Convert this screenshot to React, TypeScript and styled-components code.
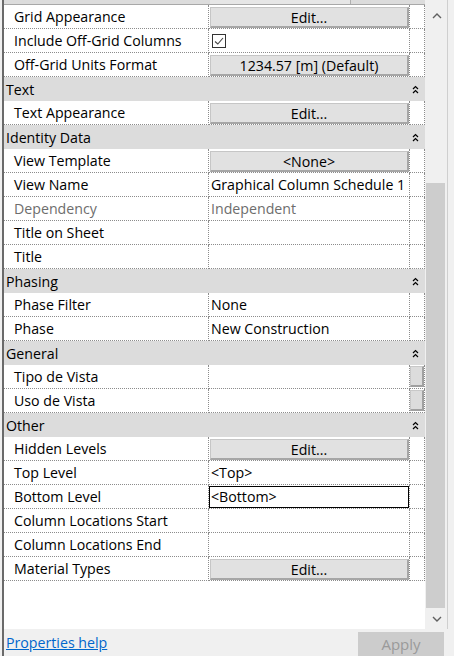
import React from "react";
import styled, { createGlobalStyle } from "styled-components";

type Prop = {
  name: string;
  value?: string;
  kind?: "text" | "button" | "check" | "muted" | "focus" | "spin";
};

type Group = { title?: string; rows: Prop[] };

const groups: Group[] = [
  {
    rows: [
      { name: "Grid Appearance", value: "Edit...", kind: "button" },
      { name: "Include Off-Grid Columns", kind: "check" },
      { name: "Off-Grid Units Format", value: "1234.57 [m] (Default)", kind: "button" },
    ],
  },
  { title: "Text", rows: [{ name: "Text Appearance", value: "Edit...", kind: "button" }] },
  {
    title: "Identity Data",
    rows: [
      { name: "View Template", value: "<None>", kind: "button" },
      { name: "View Name", value: "Graphical Column Schedule 1" },
      { name: "Dependency", value: "Independent", kind: "muted" },
      { name: "Title on Sheet" },
      { name: "Title" },
    ],
  },
  {
    title: "Phasing",
    rows: [
      { name: "Phase Filter", value: "None" },
      { name: "Phase", value: "New Construction" },
    ],
  },
  {
    title: "General",
    rows: [
      { name: "Tipo de Vista", kind: "spin" },
      { name: "Uso de Vista", kind: "spin" },
    ],
  },
  {
    title: "Other",
    rows: [
      { name: "Hidden Levels", value: "Edit...", kind: "button" },
      { name: "Top Level", value: "<Top>" },
      { name: "Bottom Level", value: "<Bottom>", kind: "focus" },
      { name: "Column Locations Start" },
      { name: "Column Locations End" },
      { name: "Material Types", value: "Edit...", kind: "button" },
    ],
  },
];

function App() {
  return (
    <>
      <GlobalStyle />
      <Frame>
        <Main>
          <Sheet>
            <CutRow>
              <CutButton />
            </CutRow>
            <Table>
              {groups.map((g, gi) => (
                <React.Fragment key={gi}>
                  {g.title && (
                    <Header>
                      <span>{g.title}</span>
                      <Collapse />
                    </Header>
                  )}
                  {g.rows.map(r => (
                    <React.Fragment key={r.name}>
                      <NameCell $muted={r.kind === "muted"}>{r.name}</NameCell>
                      <ValueCell $muted={r.kind === "muted"}>{renderValue(r)}</ValueCell>
                      <ExtraCell>{r.kind === "spin" && <SpinBox />}</ExtraCell>
                    </React.Fragment>
                  ))}
                </React.Fragment>
              ))}
            </Table>
          </Sheet>
          <ScrollBar>
            <ArrowButton $h={32}>
              <Chevron up />
            </ArrowButton>
            <Track>
              <Thumb />
            </Track>
            <ArrowButton $h={21}>
              <Chevron />
            </ArrowButton>
          </ScrollBar>
          <Edge />
        </Main>
        <Footer>
          <HelpLink href="#">Properties help</HelpLink>
          <ApplyButton disabled>Apply</ApplyButton>
        </Footer>
      </Frame>
    </>
  );
}

function renderValue(r: Prop) {
  switch (r.kind) {
    case "button":
      return <EditButton>{r.value}</EditButton>;
    case "check":
      return (
        <CheckBox>
          <svg width="12" height="12" viewBox="0 0 12 12">
            <polyline points="2,6.5 4.8,9 10,3" fill="none" stroke="#444" strokeWidth="1.1" />
          </svg>
        </CheckBox>
      );
    case "focus":
      return <FocusBox>{r.value}</FocusBox>;
    default:
      return r.value ?? null;
  }
}

function Collapse() {
  return (
    <svg width="7" height="9" viewBox="0 0 7 9">
      <polyline points="1,4 3.5,1.5 6,4" fill="none" stroke="#000" strokeWidth="1.2" />
      <polyline points="1,8 3.5,5.5 6,8" fill="none" stroke="#000" strokeWidth="1.2" />
    </svg>
  );
}

function Chevron({ up }: { up?: boolean }) {
  return (
    <svg width="10" height="6" viewBox="0 0 10 6">
      <polyline
        points={up ? "1,5 5,1 9,5" : "1,1 5,5 9,1"}
        fill="none"
        stroke="#606060"
        strokeWidth="1.4"
      />
    </svg>
  );
}

const GlobalStyle = createGlobalStyle`
  html, body {
    margin: 0;
    padding: 0;
    background: #f0f0f0;
  }
  body {
    font-family: "Open Sans", "Noto Sans", Arial, sans-serif;
    font-size: 14.2px;
    color: #000;
  }
`;

const Frame = styled.div`
  display: flex;
  flex-direction: column;
  width: 454px;
  height: 656px;
  padding-left: 2px;
  box-sizing: border-box;
  background: #f0f0f0;
  overflow: hidden;
`;

const Main = styled.div`
  display: flex;
  height: 629px;
  border-left: 2px solid #6a6a6a;
`;

const Sheet = styled.div`
  width: 421px;
  background: #fff;
  overflow: hidden;
  display: flex;
  flex-direction: column;
`;

const CutRow = styled.div`
  height: 4px;
  background: #dcdcdc;
  border-bottom: 1px solid #a8a8a8;
  display: flex;
  padding-left: 206px;
`;

const CutButton = styled.div`
  width: 140px;
  background: #e6e6e6;
  border-right: 1px solid #b0b0b0;
`;

const Table = styled.div`
  display: grid;
  grid-template-columns: 205px 201px 15px;
  grid-auto-rows: 24px;
`;

const Cell = styled.div`
  box-sizing: border-box;
  border-right: 1px dotted #8c8c8c;
  border-bottom: 1px dotted #8c8c8c;
  display: flex;
  align-items: center;
  white-space: nowrap;
  overflow: hidden;
`;

const NameCell = styled(Cell)<{ $muted?: boolean }>`
  padding-left: 10px;
  color: ${p => (p.$muted ? "#6d6d6d" : "#000")};
`;

const ValueCell = styled(Cell)<{ $muted?: boolean }>`
  padding-left: 2px;
  color: ${p => (p.$muted ? "#6d6d6d" : "#000")};
`;

const ExtraCell = styled(Cell)``;

const Header = styled.div`
  grid-column: 1 / -1;
  background: #dcdcdc;
  display: flex;
  align-items: center;
  justify-content: space-between;
  padding: 0 6px 0 2px;
`;

const EditButton = styled.div`
  box-sizing: border-box;
  align-self: flex-start;
  margin: 2px 0 0 -1px;
  width: 199px;
  height: 21px;
  background: #e1e1e1;
  border-top: 1px solid #c6c6c6;
  border-left: 1px solid #c6c6c6;
  border-right: 2px solid #a6a6a6;
  border-bottom: 2px solid #a6a6a6;
  display: flex;
  align-items: center;
  justify-content: center;
`;

const CheckBox = styled.div`
  box-sizing: border-box;
  width: 14px;
  height: 14px;
  margin-left: 1px;
  border: 1px solid #333;
  background: #fff;
  display: flex;
  align-items: center;
  justify-content: center;
`;

const FocusBox = styled.div`
  box-sizing: border-box;
  margin-left: -2px;
  padding-left: 1px;
  width: 200px;
  height: 22px;
  border: 1px solid #000;
  display: flex;
  align-items: center;
`;

const SpinBox = styled.div`
  box-sizing: border-box;
  width: 14px;
  height: 21px;
  background: #dcdcdc;
  border-top: 1px solid #c8c8c8;
  border-left: 1px solid #c8c8c8;
  border-right: 2px solid #a0a0a0;
  border-bottom: 2px solid #a0a0a0;
`;

const ScrollBar = styled.div`
  width: 22px;
  display: flex;
  flex-direction: column;
  background: #f0f0f0;
`;

const ArrowButton = styled.div<{ $h: number }>`
  height: ${p => p.$h}px;
  display: flex;
  align-items: center;
  justify-content: center;
  padding-left: 1px;
`;

const Track = styled.div`
  flex: 1;
  display: flex;
  flex-direction: column;
  padding: 0 2px 0 1px;
`;

const Thumb = styled.div`
  margin-top: 151px;
  flex: 1;
  background: #cdcdcd;
`;

const Edge = styled.div`
  width: 6px;
  border-left: 1px solid #cfcfcf;
  background: #f0f0f0;
`;

const Footer = styled.div`
  flex: 1;
  display: flex;
  justify-content: space-between;
  border-left: 2px solid #6a6a6a;
`;

const HelpLink = styled.a`
  align-self: center;
  margin-left: 2px;
  font-size: 14.2px;
  color: #0066cc;
  text-decoration: underline;
`;

const ApplyButton = styled.button`
  align-self: flex-end;
  width: 86px;
  height: 24px;
  margin-right: 10px;
  border: 0;
  padding: 0;
  background: #cccccc;
  color: #9a9a9a;
  font-family: inherit;
  font-size: 15px;
`;

export default App;
